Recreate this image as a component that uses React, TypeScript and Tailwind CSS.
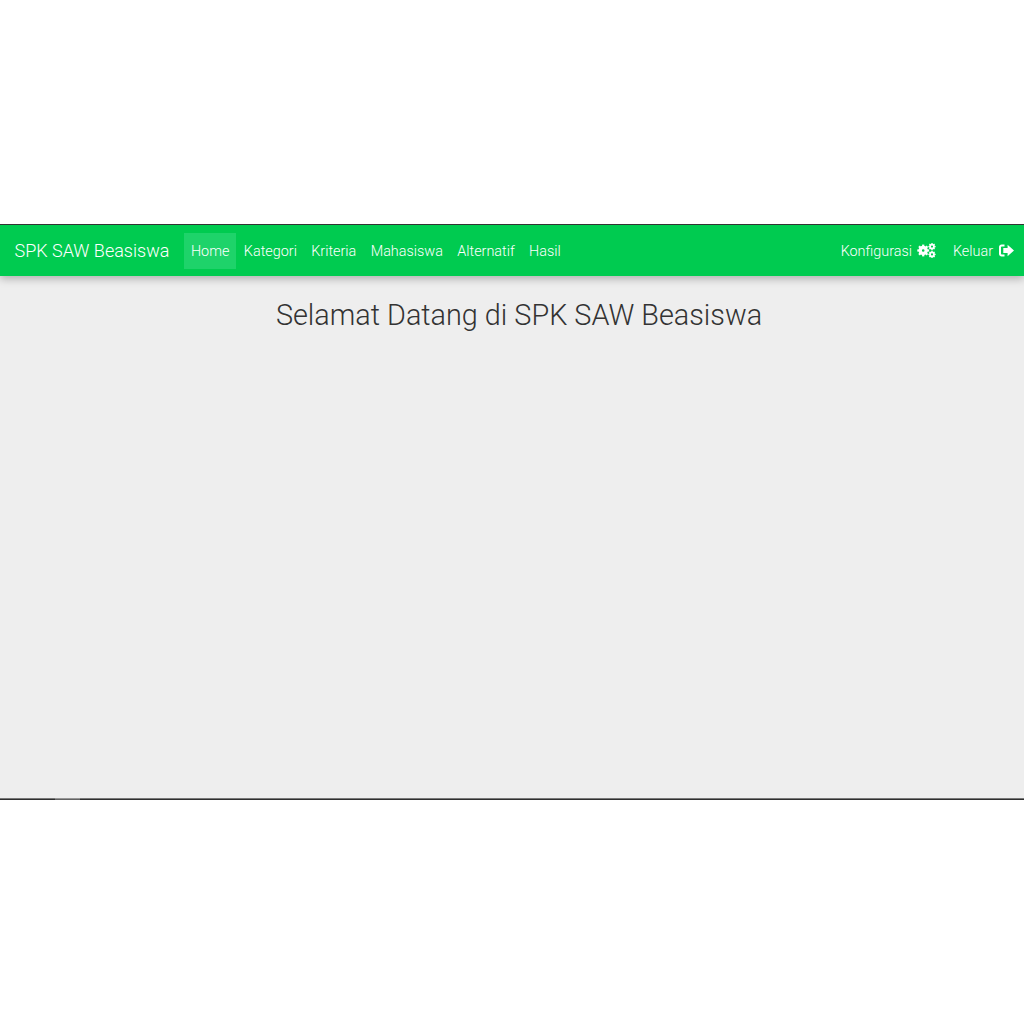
const menu = ['Kategori', 'Kriteria', 'Mahasiswa', 'Alternatif', 'Hasil'];
const angles = [0, 45, 90, 135, 180, 225, 270, 315];

function Gear({ cx, cy, r, w, tooth }: { cx: number; cy: number; r: number; w: number; tooth: number }) {
  const outer = r + w / 2;
  return (
    <g>
      <circle cx={cx} cy={cy} r={r} strokeWidth={w} fill="none" stroke="currentColor" />
      {angles.map((a) => (
        <rect
          key={a}
          x={cx - tooth / 2}
          y={cy - outer - tooth * 0.55}
          width={tooth}
          height={tooth}
          fill="currentColor"
          transform={`rotate(${a} ${cx} ${cy})`}
        />
      ))}
    </g>
  );
}

function CogsIcon() {
  return (
    <svg viewBox="0 0 19 15" className="ml-[5px] h-[15px] w-[19px]">
      <Gear cx={6.2} cy={7.5} r={3} w={3.4} tooth={2.2} />
      <Gear cx={15} cy={3.6} r={2} w={1.8} tooth={1.3} />
      <Gear cx={15} cy={11.4} r={2} w={1.8} tooth={1.3} />
    </svg>
  );
}

function SignOutIcon() {
  return (
    <svg viewBox="0 0 15 13" className="ml-[6px] h-[13px] w-[15px]" fill="currentColor">
      <path d="M5.5 0.5H2.6C1.2 0.5 0 1.7 0 3.1v6.8c0 1.4 1.2 2.6 2.6 2.6h2.9v-2H3c-.6 0-1-.4-1-1V3.5c0-.6.4-1 1-1h2.5z" />
      <path d="M8.6 0.8 15 6.5l-6.4 5.7V9H4.3V4h4.3z" />
    </svg>
  );
}

export default function App() {
  return (
    <div className="min-h-[1024px] bg-white font-['Roboto',sans-serif] font-light">
      <div className="h-[224px]" />
      <div className="relative flex h-[576px] flex-col overflow-hidden border-t border-t-[#333] bg-[#eeeeee]">
        <nav className="flex h-[51px] shrink-0 items-center bg-[#00cb50] pl-[14.5px] pr-[10px] text-white shadow-[0_3px_8px_rgba(0,0,0,0.26)]">
          <a className="mr-[14.5px] text-[18px]">SPK SAW Beasiswa</a>
          <a className="flex h-[36px] w-[52.5px] items-center justify-center bg-[#1ed36a] pt-[2px] text-[14.4px]">Home</a>
          <ul className="ml-[7.5px] flex gap-[14.4px] pt-[2px] text-[14.4px]">
            {menu.map((m) => (
              <li key={m}>{m}</li>
            ))}
          </ul>
          <div className="ml-auto flex items-center text-[14.4px]">
            <span className="pt-[2px]">Konfigurasi</span>
            <CogsIcon />
            <span className="ml-[17px] pt-[2px]">Keluar</span>
            <SignOutIcon />
          </div>
        </nav>
        <h1 className="mt-[20px] pl-[14px] text-center text-[28.8px] leading-[39px] font-light text-[#333]">
          Selamat Datang di SPK SAW Beasiswa
        </h1>
        <div className="mt-auto h-px shrink-0 bg-[#777]" />
        <div className="h-px shrink-0 bg-[#2f2f2f]" />
        <div className="absolute bottom-0 left-[55px] h-[2px] w-[25px] bg-[#ddd]/30" />
      </div>
    </div>
  );
}
